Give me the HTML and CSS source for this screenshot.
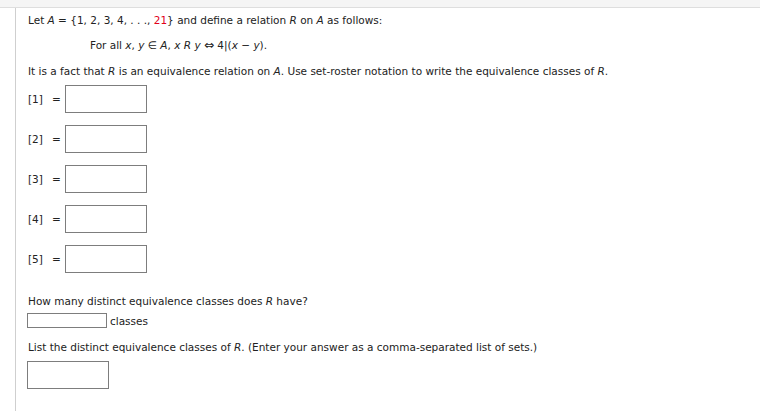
FILE: index.html
```html
<!DOCTYPE html>
<html>
<head>
<meta charset="utf-8">
<link rel="stylesheet" href="styles.css">
</head>
<body>
<div class="topbar"></div>
<div class="main">
  <p class="line first">Let <i>A</i> = {1, 2, 3, 4, . . ., <span class="red">21</span>} and define a relation <i>R</i> on <i>A</i> as follows:</p>
  <p class="line indent">For all <i>x</i>, <i>y</i> ∈ <i>A</i>, <i>x</i> <i>R</i> <i>y</i> <span class="arrow">⇔</span> 4|(<i>x</i> − <i>y</i>).</p>
  <p class="line third">It is a fact that <i>R</i> is an equivalence relation on <i>A</i>. Use set-roster notation to write the equivalence classes of <i>R</i>.</p>
  <div class="classes">
    <div class="row"><span class="lbl">[1]</span><span class="eq">=</span><span class="box"></span></div>
    <div class="row"><span class="lbl">[2]</span><span class="eq">=</span><span class="box"></span></div>
    <div class="row"><span class="lbl">[3]</span><span class="eq">=</span><span class="box"></span></div>
    <div class="row"><span class="lbl">[4]</span><span class="eq">=</span><span class="box"></span></div>
    <div class="row"><span class="lbl">[5]</span><span class="eq">=</span><span class="box"></span></div>
  </div>
  <p class="line q1">How many distinct equivalence classes does <i>R</i> have?</p>
  <div class="ansrow"><span class="small"></span><span class="unit">classes</span></div>
  <p class="line q2">List the distinct equivalence classes of <i>R</i>. (Enter your answer as a comma-separated list of sets.)</p>
  <div class="bigbox"></div>
</div>
</body>
</html>
```
FILE: styles.css
```css
html, body {
  margin: 0;
  padding: 0;
  background: #fff;
  height: 100%;
}
body {
  font-family: "DejaVu Sans", Verdana, sans-serif;
  font-size: 10.5px;
  color: #222;
  overflow: hidden;
}
.topbar {
  height: 7px;
  background: #f5f5f5;
  border-bottom: 1px solid #dedede;
}
.main {
  margin-left: 15px;
  border-left: 1px solid #cfcfcf;
  padding-left: 12px;
  height: 403px;
  box-sizing: border-box;
}
.line {
  margin: 0;
  line-height: 14px;
  white-space: nowrap;
}
.first { padding-top: 5px; }
.indent { padding-left: 62px; margin-top: 11px; }
.third { margin-top: 12px; }
.red { color: #e2001a; }
.arrow { font-size: 12px; }
.classes {
  display: flex;
  flex-direction: column;
  gap: 12px;
  margin-top: 7px;
}
.row {
  display: flex;
  align-items: center;
  height: 28px;
}
.lbl { width: 24px; }
.eq { width: 13px; }
.box {
  width: 80px;
  height: 26px;
  border: 1px solid #7d7d7d;
}
.q1 { margin-top: 21px; }
.ansrow {
  display: flex;
  align-items: center;
  margin-top: 5px;
  margin-left: -1px;
}
.small {
  width: 78px;
  height: 13px;
  border: 1px solid #7d7d7d;
}
.unit { margin-left: 3px; }
.q2 { margin-top: 12px; }
.bigbox {
  margin-top: 7px;
  margin-left: -1px;
  width: 80px;
  height: 26px;
  border: 1px solid #7d7d7d;
}
```
